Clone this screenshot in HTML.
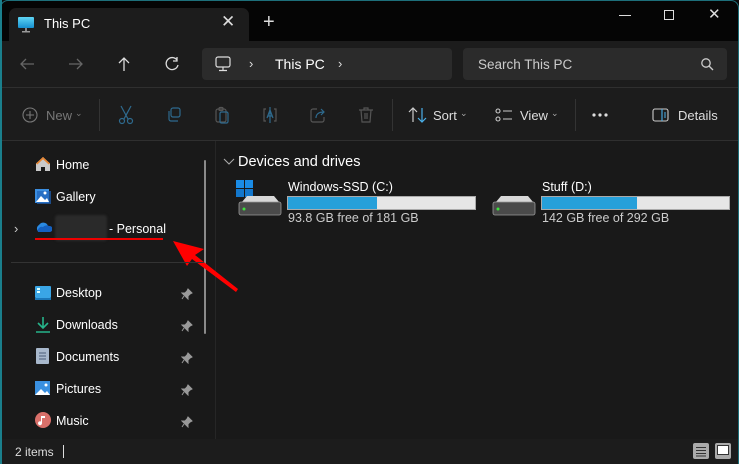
<!DOCTYPE html>
<html><head><meta charset="utf-8"><style>
*{margin:0;padding:0;box-sizing:border-box}
body{width:739px;height:464px;overflow:hidden;background:#0a0a0a;font-family:"Liberation Sans",sans-serif;color:#fff;font-size:12px;position:relative}
.a{position:absolute}
.t{position:absolute;white-space:nowrap}
</style></head><body>
<div class="a" style="left:0;top:0;width:739px;height:464px;border:1px solid #1d6f7a;border-radius:8px 8px 0 0;background:#050505"></div>
<div class="a" style="left:0;top:0;width:2px;height:464px;background:#1a7f8c"></div>
<div class="a" style="left:9px;top:8px;width:240px;height:35px;background:#1c1c1c;border-radius:7px 7px 0 0"></div>
<svg class="a" style="left:17px;top:15px" width="18" height="18"><defs><linearGradient id="g" x1="0" y1="0" x2="0" y2="1"><stop offset="0" stop-color="#5fd6f5"/><stop offset="1" stop-color="#1690d0"/></linearGradient></defs><rect x="1" y="2" width="16" height="11" rx="1" fill="url(#g)"/><rect x="8" y="13" width="2" height="3" fill="#888"/><rect x="5" y="16" width="8" height="1.5" fill="#999"/></svg>
<div class="t" style="left:44px;top:16px;font-size:13px;color:#fff">This PC</div>
<div class="t" style="left:221px;top:12px;font-size:17px;color:#ddd">✕</div>
<div class="t" style="left:263px;top:11px;font-size:20px;color:#ddd">+</div>
<div class="a" style="left:619px;top:15px;width:12px;height:1px;background:#ddd"></div>
<div class="a" style="left:664px;top:10px;width:10px;height:10px;border:1px solid #ddd"></div>
<div class="t" style="left:708px;top:5px;font-size:15px;color:#ddd">✕</div>
<div class="a" style="left:2px;top:41px;width:736px;height:423px;background:#1c1c1c"></div>
<div class="a" style="left:2px;top:87px;width:736px;height:1px;background:#2f2f2f"></div>
<svg class="a" style="left:18px;top:55px" width="18" height="18" stroke="#666" fill="none" stroke-width="1.3"><path d="M3 9h13M8 4L3 9l5 5"/></svg>
<svg class="a" style="left:67px;top:55px" width="18" height="18" stroke="#666" fill="none" stroke-width="1.3"><path d="M2 9h13M10 4l5 5-5 5"/></svg>
<svg class="a" style="left:115px;top:55px" width="18" height="18" stroke="#ddd" fill="none" stroke-width="1.3"><path d="M9 16V3M4 8l5-5 5 5"/></svg>
<svg class="a" style="left:163px;top:55px" width="18" height="18" stroke="#ddd" fill="none" stroke-width="1.3"><path d="M14 5A6 6 0 1 0 15 10"/><path d="M14 2v4h-4"/></svg>
<div class="a" style="left:202px;top:48px;width:250px;height:32px;background:#2b2b2b;border-radius:4px"></div>
<svg class="a" style="left:214px;top:55px" width="18" height="18" stroke="#ddd" fill="none" stroke-width="1.2"><rect x="2" y="2" width="14" height="10" rx="2"/><path d="M9 12v3M5 15.5h8"/></svg>
<div class="t" style="left:249px;top:56px;font-size:13px;color:#ddd">›</div>
<div class="t" style="left:275px;top:56px;font-size:14px;color:#fff">This PC</div>
<div class="t" style="left:338px;top:56px;font-size:13px;color:#ddd">›</div>
<div class="a" style="left:463px;top:48px;width:264px;height:32px;background:#2b2b2b;border-radius:4px"></div>
<div class="t" style="left:478px;top:57px;font-size:13.5px;color:#ccc">Search This PC</div>
<svg class="a" style="left:700px;top:57px" width="14" height="14" stroke="#ccc" fill="none" stroke-width="1.3"><circle cx="6" cy="6" r="4.2"/><path d="M9 9l4 4"/></svg>
<svg class="a" style="left:21px;top:106px" width="18" height="18" stroke="#777" fill="none" stroke-width="1.1"><circle cx="9" cy="9" r="7"/><path d="M9 5v8M5 9h8"/></svg>
<div class="t" style="left:46px;top:108px;font-size:13px;color:#777">New</div>
<div class="t" style="left:75px;top:108px;font-size:9px;color:#777">⌄</div>
<div class="a" style="left:99px;top:99px;width:1px;height:32px;background:#333"></div>
<svg class="a" style="left:117px;top:105px" width="18" height="20" stroke="#2e6a8e" fill="none" stroke-width="1.2"><path d="M4 1l7 13M14 1L7 14"/><circle cx="5" cy="16" r="2.5"/><circle cx="13" cy="16" r="2.5"/></svg>
<svg class="a" style="left:165px;top:106px" width="18" height="18" stroke="#2e6a8e" fill="none" stroke-width="1.2"><rect x="6" y="2" width="9" height="9" rx="2"/><path d="M4 5v8a2 2 0 0 0 2 2h7"/></svg>
<svg class="a" style="left:213px;top:106px" width="18" height="18" stroke="#555" fill="none" stroke-width="1.2"><rect x="3" y="3" width="10" height="13" rx="2"/><rect x="7" y="6" width="8" height="11" rx="1.5" stroke="#2e6a8e"/><rect x="6" y="1.5" width="4" height="3" rx="1"/></svg>
<svg class="a" style="left:261px;top:105px" width="18" height="20" stroke="#555" fill="none" stroke-width="1.2"><path d="M5 4H3v12h2M13 4h2v12h-2"/><path d="M6 13l3-8 3 8M7 11h4M9 2v16" stroke="#2e6a8e"/></svg>
<svg class="a" style="left:309px;top:106px" width="18" height="18" stroke="#555" fill="none" stroke-width="1.2"><path d="M8 3H4a2 2 0 0 0-2 2v9a2 2 0 0 0 2 2h9a2 2 0 0 0 2-2v-3"/><path d="M7 12c0-4 3-6 8-6M12 3l3 3-3 3" stroke="#2e6a8e"/></svg>
<svg class="a" style="left:357px;top:106px" width="18" height="18" stroke="#555" fill="none" stroke-width="1.2"><path d="M2 4h14M7 4V2h4v2M4 4l1 12h8l1-12M8 7v6M10 7v6"/></svg>
<div class="a" style="left:392px;top:99px;width:1px;height:32px;background:#333"></div>
<svg class="a" style="left:408px;top:106px" width="20" height="18" fill="none" stroke-width="1.2"><path d="M5 16V2M1 6l4-4 4 4" stroke="#ccc"/><path d="M14 2v14M10 12l4 4 4-4" stroke="#4ab0ea"/></svg>
<div class="t" style="left:433px;top:108px;font-size:13px;color:#ddd">Sort</div>
<div class="t" style="left:460px;top:108px;font-size:9px;color:#aaa">⌄</div>
<svg class="a" style="left:495px;top:107px" width="18" height="16" stroke="#ccc" fill="none" stroke-width="1.1"><rect x="1" y="2" width="4" height="4" rx="2"/><rect x="1" y="10" width="4" height="4" rx="2"/><path d="M8 4h9M8 12h9"/></svg>
<div class="t" style="left:520px;top:108px;font-size:13px;color:#ddd">View</div>
<div class="t" style="left:551px;top:108px;font-size:9px;color:#aaa">⌄</div>
<div class="a" style="left:575px;top:99px;width:1px;height:32px;background:#333"></div>
<svg class="a" style="left:591px;top:112px" width="20" height="6" fill="#ddd"><circle cx="3" cy="3" r="1.6"/><circle cx="9" cy="3" r="1.6"/><circle cx="15" cy="3" r="1.6"/></svg>
<svg class="a" style="left:652px;top:107px" width="18" height="16" fill="none" stroke-width="1.1"><rect x="1" y="2" width="15" height="12" rx="2" stroke="#ccc"/><path d="M10 2v12M12 6h2M12 8h2M12 10h2" stroke="#4ab0ea"/></svg>
<div class="t" style="left:678px;top:108px;font-size:13px;color:#ddd">Details</div>
<div class="a" style="left:2px;top:140px;width:736px;height:1px;background:#2f2f2f"></div>
<div class="a" style="left:2px;top:141px;width:736px;height:298px;background:#191919"></div>
<div class="a" style="left:215px;top:141px;width:1px;height:298px;background:#262626"></div>
<div class="a" style="left:204px;top:160px;width:2px;height:174px;background:#8a8a8a;border-radius:1px"></div>
<svg class="a" style="left:35px;top:156px" width="16" height="16"><path d="M8 1L1 7.5V15h5v-4h4v4h5V7.5z" fill="#c9c9c9"/><path d="M8 1L1 7.5l1.3 1L8 3.3l5.7 5.2 1.3-1z" fill="#e9852f"/></svg>
<div class="t" style="left:56px;top:158px;font-size:12.5px;color:#fff">Home</div>
<svg class="a" style="left:35px;top:188px" width="16" height="16"><rect x="0" y="1" width="14" height="14" fill="#3b8ee0"/><rect x="2" y="3" width="14" height="13" fill="#1f63b8" opacity=".7"/><path d="M1 14l5-6 4 4 2-2 2 4z" fill="#fff"/><circle cx="10" cy="5" r="1.5" fill="#fff"/></svg>
<div class="t" style="left:56px;top:190px;font-size:12.5px;color:#fff">Gallery</div>
<div class="t" style="left:14px;top:221px;font-size:13px;color:#ccc">›</div>
<svg class="a" style="left:35px;top:221px" width="17" height="12"><path d="M4 11a4 4 0 0 1 0-7 5 5 0 0 1 9 1 3 3 0 0 1 1 6z" fill="#2a8ae2"/><path d="M3 11h12a3 3 0 0 0-1-6 5 5 0 0 0-6 1 4 4 0 0 0-5 5z" fill="#1460c0"/></svg>
<div class="a" style="left:55px;top:215px;width:52px;height:26px;background:#2a2a2a;border-radius:3px;filter:blur(1px)"></div>
<div class="t" style="left:109px;top:222px;font-size:12.5px;color:#fff">- Personal</div>
<div class="a" style="left:35px;top:238px;width:128px;height:2px;background:#ee0000"></div>
<svg class="a" style="left:160px;top:230px" width="90" height="70"><path d="M13 11L44 19 35 25 78 59 76 62 32 29 27 36z" fill="#ff0000"/></svg>
<div class="a" style="left:11px;top:262px;width:193px;height:1px;background:#333"></div>
<svg class="a" style="left:35px;top:285px" width="16" height="16"><rect x="0" y="1" width="16" height="12" rx="1" fill="#3aa6e6"/><rect x="2" y="3" width="3" height="2" fill="#dff"/><rect x="2" y="6" width="3" height="2" fill="#dff"/><rect x="0" y="13" width="16" height="2" fill="#1b77b8"/></svg>
<div class="t" style="left:56px;top:286px;font-size:12.5px;color:#fff">Desktop</div>
<svg class="a" style="left:35px;top:316px" width="16" height="18" stroke="#26b48a" fill="none" stroke-width="1.6"><path d="M8 1v11M3 7l5 5 5-5M1 16h14"/></svg>
<div class="t" style="left:56px;top:318px;font-size:12.5px;color:#fff">Downloads</div>
<svg class="a" style="left:36px;top:348px" width="14" height="17"><rect x="0" y="0" width="13" height="16" rx="1" fill="#a8b8cc"/><path d="M3 5h7M3 8h7M3 11h7" stroke="#4a5c78" stroke-width="1"/></svg>
<div class="t" style="left:56px;top:350px;font-size:12.5px;color:#fff">Documents</div>
<svg class="a" style="left:35px;top:380px" width="16" height="16"><rect x="0" y="1" width="15" height="14" fill="#3a90e0"/><path d="M0 15l6-6 4 4 2-2 3 4z" fill="#fff"/><circle cx="11" cy="5" r="1.5" fill="#fff"/></svg>
<div class="t" style="left:56px;top:382px;font-size:12.5px;color:#fff">Pictures</div>
<svg class="a" style="left:35px;top:412px" width="16" height="16"><circle cx="8" cy="8" r="8" fill="#d9706a"/><path d="M7 4v7a2 2 0 1 1-1-1.5V4h4v2H7" fill="#fff"/></svg>
<div class="t" style="left:56px;top:414px;font-size:12.5px;color:#fff">Music</div>
<svg class="a" style="left:181px;top:288px" width="12" height="12"><path d="M7 1l4 4-2 1-2 2v3L1 5h3l2-2z M3 8l-2 3" fill="#999" stroke="#999"/></svg>
<svg class="a" style="left:181px;top:320px" width="12" height="12"><path d="M7 1l4 4-2 1-2 2v3L1 5h3l2-2z M3 8l-2 3" fill="#999" stroke="#999"/></svg>
<svg class="a" style="left:181px;top:352px" width="12" height="12"><path d="M7 1l4 4-2 1-2 2v3L1 5h3l2-2z M3 8l-2 3" fill="#999" stroke="#999"/></svg>
<svg class="a" style="left:181px;top:384px" width="12" height="12"><path d="M7 1l4 4-2 1-2 2v3L1 5h3l2-2z M3 8l-2 3" fill="#999" stroke="#999"/></svg>
<svg class="a" style="left:181px;top:416px" width="12" height="12"><path d="M7 1l4 4-2 1-2 2v3L1 5h3l2-2z M3 8l-2 3" fill="#999" stroke="#999"/></svg>
<svg class="a" style="left:223px;top:157px" width="12" height="10" stroke="#aaa" fill="none" stroke-width="1.1"><path d="M1 2l5 5 5-5"/></svg>
<div class="t" style="left:238px;top:154px;font-size:14.5px;color:#fff">Devices and drives</div>
<svg class="a" style="left:236px;top:180px" width="46" height="36">
<rect x="0" y="0" width="8" height="8" fill="#1a8ce6"/><rect x="9" y="0" width="8" height="8" fill="#1a8ce6"/><rect x="0" y="9" width="8" height="8" fill="#1377cc"/><rect x="9" y="9" width="8" height="8" fill="#1377cc"/>
<path d="M6 22l5-6h27l5 6z" fill="#d8d8d8"/><rect x="3" y="22" width="42" height="13" rx="2" fill="#4a4a4a" stroke="#999" stroke-width=".8"/><circle cx="8" cy="29" r="1.5" fill="#3de03d"/></svg>
<div class="t" style="left:288px;top:180px;font-size:12.5px;color:#fff">Windows-SSD (C:)</div>
<div class="a" style="left:287px;top:196px;width:189px;height:14px;background:#e6e6e6;border:1px solid #aaa"></div>
<div class="a" style="left:288px;top:197px;width:89px;height:12px;background:#26a0da"></div>
<div class="t" style="left:288px;top:211px;font-size:12.5px;color:#ccc">93.8 GB free of 181 GB</div>
<svg class="a" style="left:490px;top:180px" width="46" height="36"><path d="M6 22l5-6h27l5 6z" fill="#d8d8d8"/><rect x="3" y="22" width="42" height="13" rx="2" fill="#4a4a4a" stroke="#999" stroke-width=".8"/><circle cx="8" cy="29" r="1.5" fill="#3de03d"/></svg>
<div class="t" style="left:542px;top:180px;font-size:12.5px;color:#fff">Stuff (D:)</div>
<div class="a" style="left:541px;top:196px;width:189px;height:14px;background:#e6e6e6;border:1px solid #aaa"></div>
<div class="a" style="left:542px;top:197px;width:95px;height:12px;background:#26a0da"></div>
<div class="t" style="left:542px;top:211px;font-size:12.5px;color:#ccc">142 GB free of 292 GB</div>
<div class="t" style="left:15px;top:445px;font-size:12px;color:#ddd">2 items</div>
<div class="a" style="left:63px;top:445px;width:1px;height:13px;background:#ddd"></div>
<div class="a" style="left:693px;top:443px;width:16px;height:16px;background:#aaa;border-radius:2px"></div>
<svg class="a" style="left:693px;top:443px" width="16" height="16" stroke="#333" stroke-width="1"><path d="M3 4.5h10M3 7.5h10M3 10.5h10M3 13h10"/></svg>
<div class="a" style="left:715px;top:443px;width:16px;height:16px;background:#aaa;border-radius:2px"></div>
<div class="a" style="left:717px;top:445px;width:12px;height:10px;background:#fff;border:1px solid #333"></div>
</body></html>
